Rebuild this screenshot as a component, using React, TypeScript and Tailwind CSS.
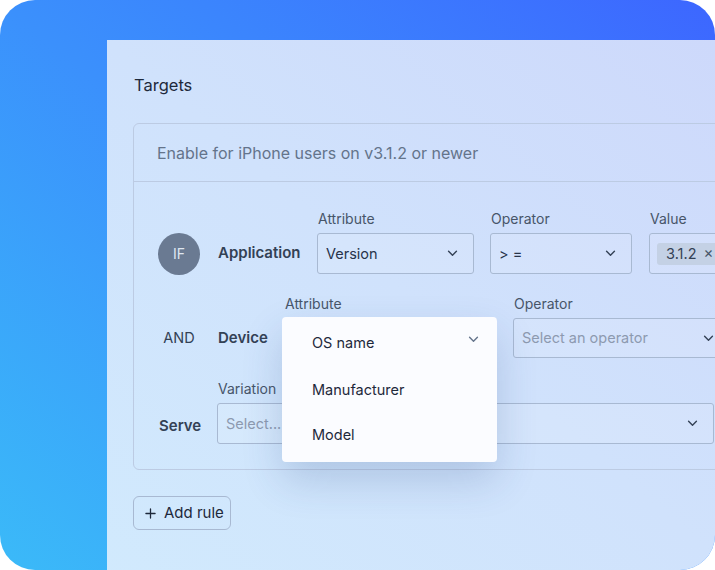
import React from 'react';

const Chevron: React.FC<{ className?: string }> = ({ className = '' }) => (
    <svg viewBox="0 0 12 8" className={`w-[11px] h-[7px] ${className}`} fill="none">
        <path d="M1.5 1.5 6 6l4.5-4.5" stroke="currentColor" strokeWidth="1.6" strokeLinecap="round" strokeLinejoin="round" />
    </svg>
);

const Field: React.FC<{ label: string; width: string; children: React.ReactNode }> = ({ label, width, children }) => (
    <div className={`flex flex-col ${width}`}>
        <span className="text-[14px] leading-[17px] text-[#475569] mb-[6px] pl-px">{label}</span>
        {children}
    </div>
);

const SelectBox: React.FC<{ text: string; placeholder?: boolean; h?: string; chevronPad?: string }> = ({ text, placeholder, h = 'h-[41px]', chevronPad = 'pr-[15px]' }) => (
    <div className={`${h} flex items-center justify-between pl-[8px] ${chevronPad} border border-[#a8b9d2] rounded-[3px] bg-white/10`}>
        <span className={`text-[14.5px] ${placeholder ? 'text-[#8d9ab0]' : 'text-[#27334a]'}`}>{text}</span>
        <Chevron className="text-[#334155]" />
    </div>
);

const App: React.FC = () => {
    return (
        <div className="w-[715px] h-[570px] bg-white" style={{ fontFamily: 'Inter, "Noto Sans", sans-serif' }}>
            <div className="w-[715px] h-[570px] rounded-[35px] overflow-hidden bg-linear-to-tr from-[#3bbaf8] via-[#3b90fc] to-[#3d66ff] pl-[107px] pt-[40px]">
                <div className="w-[660px] h-[560px] bg-linear-to-tr from-[#d1eafd] via-[#d0e2fc] to-[#cdd8fb] pl-[26px] pt-[35px]">
                    <h2 className="text-[16.5px] leading-[20px] text-[#1e293b] pl-px">Targets</h2>

                    <div className="mt-[28px] w-[640px] border border-[#bccbe3] rounded-[6px]">
                        <div className="h-[58px] flex items-center pl-[23px] border-b border-[#bccbe3]">
                            <span className="text-[16px] text-[#64748b]">Enable for iPhone users on v3.1.2 or newer</span>
                        </div>

                        <div className="pl-[24px] pt-[28px] pb-[25px]">
                            {/* IF row */}
                            <div className="flex items-end">
                                <div className="h-[41px] w-[42px] flex items-center">
                                    <div className="w-[42px] h-[42px] rounded-full bg-[#6a7a92] flex items-center justify-center text-[14px] text-[#dfe6f1]">IF</div>
                                </div>
                                <div className="h-[41px] w-[117px] pl-[18px] flex items-center text-[15px] font-semibold text-[#334155]">Application</div>
                                <Field label="Attribute" width="w-[157px]">
                                    <SelectBox text="Version" />
                                </Field>
                                <div className="w-[16px]" />
                                <Field label="Operator" width="w-[142px]">
                                    <SelectBox text="> =" />
                                </Field>
                                <div className="w-[17px]" />
                                <Field label="Value" width="w-[120px]">
                                    <div className="h-[41px] flex items-center pl-[7px] border border-[#a8b9d2] rounded-[3px] bg-white/10">
                                        <span className="h-[22px] flex items-center gap-[7px] pl-[9px] pr-[8px] rounded-[3px] bg-[#c4d1e5] text-[14.5px] text-[#334155]">
                                            3.1.2 <span className="text-[15px] text-[#475569]">×</span>
                                        </span>
                                    </div>
                                </Field>
                            </div>

                            {/* AND row */}
                            <div className="flex items-end mt-[21px]">
                                <div className="h-[40px] w-[42px] flex items-center justify-center text-[14.5px] text-[#334155]">AND</div>
                                <div className="h-[40px] w-[84px] pl-[18px] flex items-center text-[15px] font-semibold text-[#334155]">Device</div>
                                <div className="relative">
                                    <Field label="Attribute" width="w-[213px]">
                                        <SelectBox text="" h="h-[40px]" />
                                    </Field>
                                    <div className="absolute left-[-2px] top-[22px] w-[215px] h-[145px] rounded-[4px] bg-[#fbfcff] shadow-[0_18px_40px_rgba(40,70,130,0.2)] flex flex-col pl-[30px] pr-[18px] text-[14.5px] text-[#1e293b]">
                                        <div className="h-[50px] flex items-center justify-between pb-[1px]">
                                            <span className="mt-[2px]">OS name</span>
                                            <Chevron className="text-[#64748b] mb-[5px]" />
                                        </div>
                                        <div className="h-[46px] flex items-center">Manufacturer</div>
                                        <div className="h-[44px] flex items-center">Model</div>
                                    </div>
                                </div>
                                <div className="w-[16px]" />
                                <Field label="Operator" width="w-[210px]">
                                    <SelectBox text="Select an operator" placeholder h="h-[40px]" chevronPad="pr-[8px]" />
                                </Field>
                            </div>

                            {/* Serve row */}
                            <div className="flex items-end mt-[22px]">
                                <div className="h-[41px] w-[59px] flex items-center pl-px pt-[5px] text-[15px] font-semibold text-[#334155]">Serve</div>
                                <Field label="Variation" width="w-[497px]">
                                    <SelectBox text="Select..." placeholder />
                                </Field>
                            </div>
                        </div>
                    </div>

                    <button className="mt-[26px] h-[34px] w-[98px] flex items-center gap-[8px] pl-[11px] border border-[#a8b9d2] rounded-[6px] text-[15px] text-[#1e293b]">
                        <svg viewBox="0 0 12 12" className="w-[11px] h-[11px]" fill="none">
                            <path d="M6 1v10M1 6h10" stroke="currentColor" strokeWidth="1.4" strokeLinecap="round" />
                        </svg>
                        Add rule
                    </button>
                </div>
            </div>
        </div>
    );
};

export default App;
